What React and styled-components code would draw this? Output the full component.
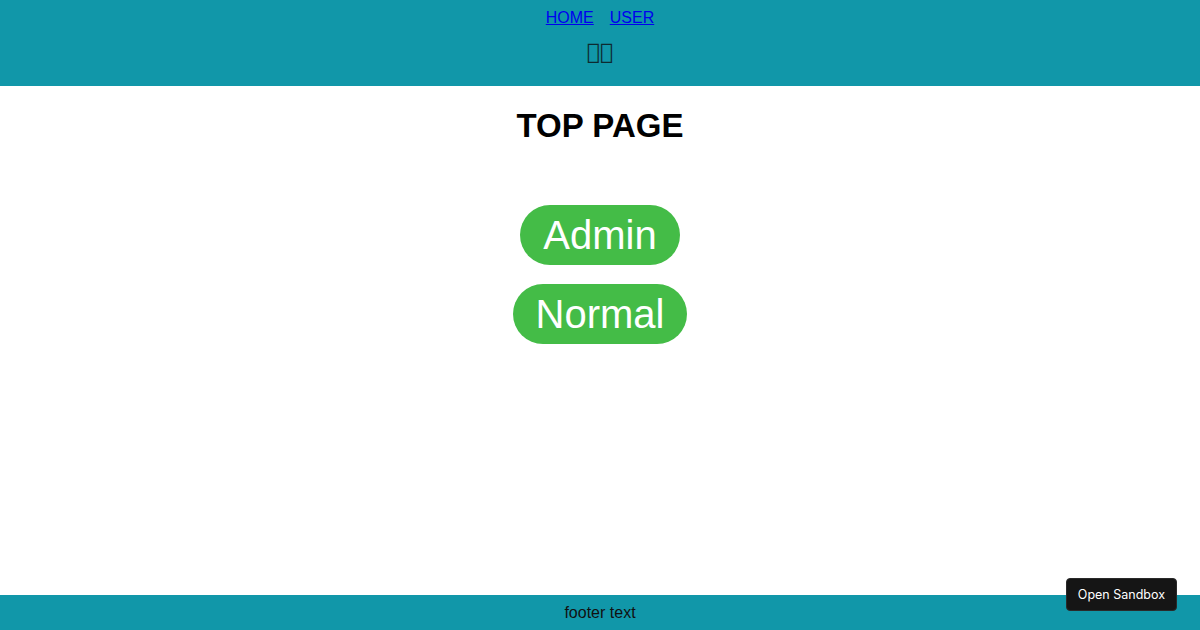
import React from "react";
import styled, { createGlobalStyle } from "styled-components";

const Global = createGlobalStyle`
  html, body { margin: 0; padding: 0; }
  body { font-family: "Liberation Sans", Arial, sans-serif; font-size: 16px; color: #000; background: #fff; }
`;

const Page = styled.div`
  min-height: 100vh;
  display: flex;
  flex-direction: column;
`;

const Header = styled.header`
  background: #1197a9;
  height: 86px;
  box-sizing: border-box;
  padding-top: 9px;
  display: flex;
  flex-direction: column;
  align-items: center;
`;

const Nav = styled.nav`
  display: flex;
  gap: 16px;
  line-height: 18px;
`;

const NavLink = styled.a`
  color: #0000ee;
  text-decoration: underline;
`;

const Sub = styled.div`
  margin-top: 16px;
  height: 18px;
  line-height: 18px;
  color: #0d2a30;
  font-family: "DejaVu Sans", sans-serif;
  font-size: 22px;
`;

const Main = styled.main`
  flex: 1;
  display: flex;
  flex-direction: column;
  align-items: center;
`;

const Title = styled.h1`
  font-size: 33px;
  font-weight: bold;
  margin: 21px 0 0;
  line-height: 37px;
`;

const Buttons = styled.div`
  display: flex;
  flex-direction: column;
  align-items: center;
  gap: 19px;
  margin-top: 61px;
`;

const Pill = styled.button`
  background: #44bc47;
  color: #fff;
  border: none;
  border-radius: 30px;
  font-family: "Liberation Sans", Arial, sans-serif;
  font-size: 40px;
  line-height: 46px;
  padding: 7px 23px;
  cursor: pointer;
`;

const Footer = styled.footer`
  background: #1197a9;
  height: 35px;
  display: flex;
  align-items: center;
  justify-content: center;
  color: #111;
`;

const Sandbox = styled.button`
  position: fixed;
  right: 23px;
  bottom: 19px;
  height: 33px;
  padding: 0 11px;
  background: #151515;
  color: #fff;
  border: 1px solid #2a2a2a;
  border-radius: 4px;
  font-family: Inter, "Noto Sans", sans-serif;
  font-size: 12.5px;
`;

export default function App() {
  return (
    <Page>
      <Global />
      <Header>
        <Nav>
          <NavLink href="#">HOME</NavLink>
          <NavLink href="#">USER</NavLink>
        </Nav>
        <Sub>{"\uE000\uE001"}</Sub>
      </Header>
      <Main>
        <Title>TOP PAGE</Title>
        <Buttons>
          <Pill>Admin</Pill>
          <Pill>Normal</Pill>
        </Buttons>
      </Main>
      <Footer>footer text</Footer>
      <Sandbox>Open Sandbox</Sandbox>
    </Page>
  );
}
